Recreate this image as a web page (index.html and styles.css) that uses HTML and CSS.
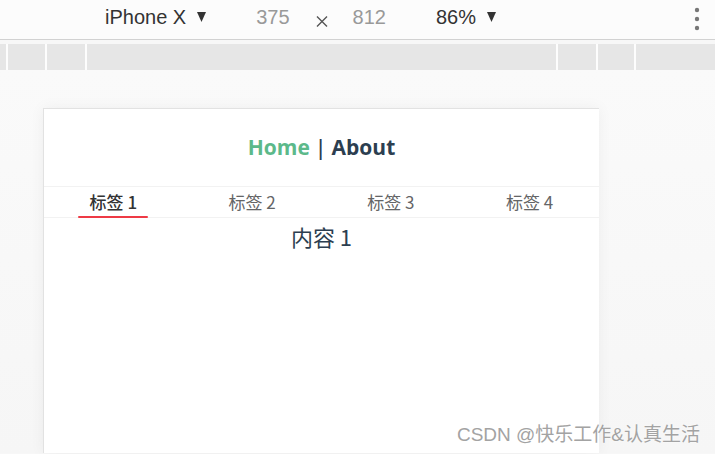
FILE: index.html
```html
<!DOCTYPE html>
<html>
<head>
    <title>Device preview</title>
    <link rel="stylesheet" href="styles.css">
</head>
<body>
    <div class="toolbar">
        <div class="device">iPhone X
            <svg class="caret" width="9" height="10" viewBox="0 0 9 10"><polygon points="0,0 9,0 4.5,10" fill="#333"/></svg>
        </div>
        <span class="dim dim-w">375</span>
        <svg class="times" width="12" height="11" viewBox="0 0 12 11">
            <path d="M1 0.5 L11 10.5 M11 0.5 L1 10.5" stroke="#555" stroke-width="1.4" fill="none"/>
        </svg>
        <span class="dim">812</span>
        <div class="zoom">86%
            <svg class="caret" width="9" height="10" viewBox="0 0 9 10"><polygon points="0,0 9,0 4.5,10" fill="#333"/></svg>
        </div>
        <svg class="kebab" width="6" height="24" viewBox="0 0 6 24">
            <circle cx="3" cy="3" r="2.2" fill="#777"/>
            <circle cx="3" cy="12" r="2.2" fill="#777"/>
            <circle cx="3" cy="21" r="2.2" fill="#777"/>
        </svg>
    </div>

    <div class="ruler">
        <div class="seg" style="width: 6px"></div>
        <div class="seg" style="width: 37px"></div>
        <div class="seg" style="width: 38px"></div>
        <div class="seg" style="width: 469px"></div>
        <div class="seg" style="width: 38px"></div>
        <div class="seg" style="width: 36px"></div>
        <div class="seg seg-fill"></div>
    </div>

    <div class="stage">
        <div class="screen">
            <div id="nav">
                <a class="active">Home</a><span class="sep">|</span><a>About</a>
            </div>
            <div class="tabs">
                <div class="tab active">标签 1<span class="line"></span></div>
                <div class="tab">标签 2</div>
                <div class="tab">标签 3</div>
                <div class="tab">标签 4</div>
            </div>
            <div class="content">内容 1</div>
        </div>
    </div>

    <div class="watermark">CSDN @快乐工作&amp;认真生活</div>
</body>
</html>
```

FILE: styles.css
```css
body {
    margin: 0;
    font-family: "Liberation Sans", Arial, sans-serif;
    background-color: #f7f7f7;
    height: 454px;
    overflow: hidden;
    position: relative;
}
.toolbar {
    height: 40px;
    box-sizing: border-box;
    padding: 0 0 4px 105px;
    background-color: #fcfcfc;
    border-bottom: 1px solid #d2d2d2;
    display: flex;
    align-items: center;
    font-size: 20px;
    color: #333;
}
.device, .zoom {
    display: flex;
    align-items: center;
}
.caret {
    margin-left: 11px;
    margin-top: -1px;
}
.dim {
    color: #999;
}
.dim-w {
    margin-left: 50px;
}
.times {
    margin: 8px 25px 0 26px;
}
.zoom {
    margin-left: 50px;
}
.kebab {
    margin-left: 198px;
    margin-top: 3px;
}
.ruler {
    margin-top: 4px;
    height: 26px;
    display: flex;
    gap: 2px;
    background-color: #fdfdfd;
}
.seg {
    background-color: #e6e6e6;
}
.seg-fill {
    flex: 1;
}
.stage {
    padding: 38px 0 0 43px;
    background: linear-gradient(#fafafa, #f6f6f6);
}
.screen {
    width: 555px;
    height: 344px;
    background-color: #fff;
    border-top: 1px solid #e2e2e2;
    border-left: 1px solid #e2e2e2;
    box-shadow: 0 0 14px rgba(0,0,0,0.05);
}
#nav {
    height: 77px;
    box-sizing: border-box;
    padding-top: 24px;
    text-align: center;
    font-family: "Open Sans", sans-serif;
    font-size: 21px;
    color: #2c3e50;
}
#nav a {
    font-weight: bold;
    color: #2c3e50;
}
#nav a.active {
    color: #5cb98a;
}
#nav .sep {
    font-family: "Liberation Sans", sans-serif;
    font-weight: normal;
    font-size: 22px;
    margin: 0 8px 0 8px;
}
.tabs {
    display: flex;
    height: 30px;
    border-top: 1px solid #f2f2f2;
    border-bottom: 1px solid #f2f2f2;
}
.tab {
    flex: 1;
    position: relative;
    display: flex;
    align-items: center;
    justify-content: center;
    padding-bottom: 2px;
    font-family: "Noto Sans CJK SC", sans-serif;
    font-size: 17px;
    color: #646566;
}
.tab.active {
    color: #323233;
    font-weight: 500;
}
.tab .line {
    position: absolute;
    bottom: -1px;
    left: 50%;
    width: 70px;
    height: 2px;
    margin-left: -35px;
    background-color: #ee3a45;
    border-radius: 1px;
}
.content {
    text-align: center;
    font-family: "Noto Sans CJK SC", sans-serif;
    font-size: 22px;
    line-height: 36px;
    color: #2c3e50;
}
.watermark {
    position: absolute;
    right: 15px;
    bottom: 8px;
    font-family: "Liberation Sans", "Noto Sans CJK SC", sans-serif;
    font-size: 19px;
    color: #a3a3a3;
    text-shadow: 0 0 2px #fff;
}
```
